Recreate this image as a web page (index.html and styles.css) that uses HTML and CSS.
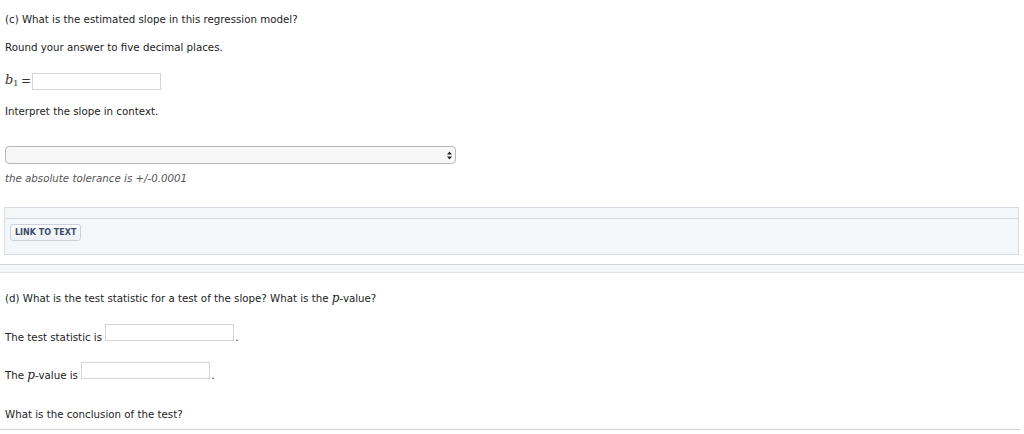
FILE: index.html
```html
<!DOCTYPE html>
<html>
<head>
<meta charset="utf-8">
<link rel="stylesheet" href="styles.css">
</head>
<body>
<div class="page">
  <section class="part">
    <p class="q q-first">(c) What is the estimated slope in this regression model?</p>
    <p class="q q-round">Round your answer to five decimal places.</p>
    <div class="ans-row row-b1">
      <span class="math">b<sub>1</sub></span><span class="eq">=</span><span class="field"></span>
    </div>
    <p class="q q-interp">Interpret the slope in context.</p>
    <div class="select"><span class="arrows"><svg width="5" height="9" viewBox="0 0 5 9"><path d="M0 3.5 L2.5 0.5 L5 3.5 Z M0 5.5 L2.5 8.5 L5 5.5 Z" fill="#222"/></svg></span></div>
    <p class="tol">the absolute tolerance is +/-0.0001</p>
    <div class="linkbox">
      <div class="linkbox-head"></div>
      <div class="linkbox-body"><span class="btn">LINK TO TEXT</span></div>
    </div>
  </section>
  <div class="sep"></div>
  <section class="part">
    <p class="q q-d">(d) What is the test statistic for a test of the slope? What is the <span class="mi">p</span>-value?</p>
    <div class="text-row row-stat">The test statistic is <span class="field"></span>.</div>
    <div class="text-row row-p">The <span class="mi">p</span>-value is <span class="field"></span>.</div>
    <p class="q q-concl">What is the conclusion of the test?</p>
  </section>
  <div class="bottom-rule"></div>
</div>
</body>
</html>
```

FILE: styles.css
```css
html, body {
  margin: 0;
  padding: 0;
  background: #fff;
}
body {
  font-family: "DejaVu Sans", Verdana, sans-serif;
  font-size: 10.25px;
  color: #222;
}
.page {
  width: 1024px;
}
.part {
  padding: 0 5px;
}
.q {
  margin: 0;
  line-height: 14px;
}
.q-first { padding-top: 12px; }
.q-round { margin-top: 14px; }
.ans-row {
  height: 17px;
  line-height: 17px;
  white-space: nowrap;
}
.ans-row > * { vertical-align: middle; }
.row-b1 { margin-top: 17px; }
.math {
  display: inline-block;
  font-family: "DejaVu Serif", "Liberation Serif", serif;
  font-style: italic;
  font-size: 13px;
  color: #333;
  width: 14px;
}
.math sub {
  font-style: normal;
  font-size: 8px;
  vertical-align: -2px;
}
.eq {
  font-family: "DejaVu Serif", serif;
  font-size: 12px;
  margin-left: 2px;
  margin-right: 1px;
  color: #333;
}
.field {
  display: inline-block;
  width: 127px;
  height: 15px;
  border: 1px solid #d4d4d4;
  background: #fff;
}
.text-row {
  line-height: 17px;
  white-space: nowrap;
}
.text-row .field { margin-right: 1px; }
.q-interp { margin-top: 16px; }
.select {
  margin-top: 28px;
  width: 446px;
  height: 16px;
  border: 1px solid #b8b8b8;
  border-radius: 4px;
  background: #f7f7f7;
  display: flex;
  justify-content: flex-end;
  align-items: center;
  padding-right: 3px;
}
.arrows { display: flex; }
.tol {
  margin: 7px 0 0;
  line-height: 14px;
  font-style: italic;
  color: #555;
}
.linkbox {
  margin: 22px 0 0 -1px;
  width: 1013px;
  border: 1px solid #d6dbe1;
  background: #f4f7fa;
}
.linkbox-head {
  height: 10px;
  border-bottom: 1px solid #d6dbe1;
}
.linkbox-body {
  height: 35px;
  padding: 5px 0 0 5px;
  box-sizing: border-box;
}
.btn {
  display: inline-block;
  height: 15px;
  padding: 0 4px;
  border: 1px solid #ccd2da;
  border-radius: 3px;
  background: linear-gradient(#fafbfc, #eef1f4);
  font-size: 8px;
  font-weight: bold;
  line-height: 15px;
  color: #3b4a6b;
}
.sep {
  margin-top: 9px;
  height: 7px;
  border-top: 1px solid #cfd5dc;
  border-bottom: 1px solid #dde2e7;
  background: #f4f7fa;
}
.q-d { margin-top: 18px; }
.mi {
  font-family: "DejaVu Serif", "Liberation Serif", serif;
  font-style: italic;
  font-size: 12px;
}
.row-stat { margin-top: 19px; }
.row-p { margin-top: 16px; }
.q-concl { margin-top: 23px; }
.bottom-rule {
  margin-top: 8px;
  width: 1020px;
  border-top: 1px solid #d0d0d0;
}
```
